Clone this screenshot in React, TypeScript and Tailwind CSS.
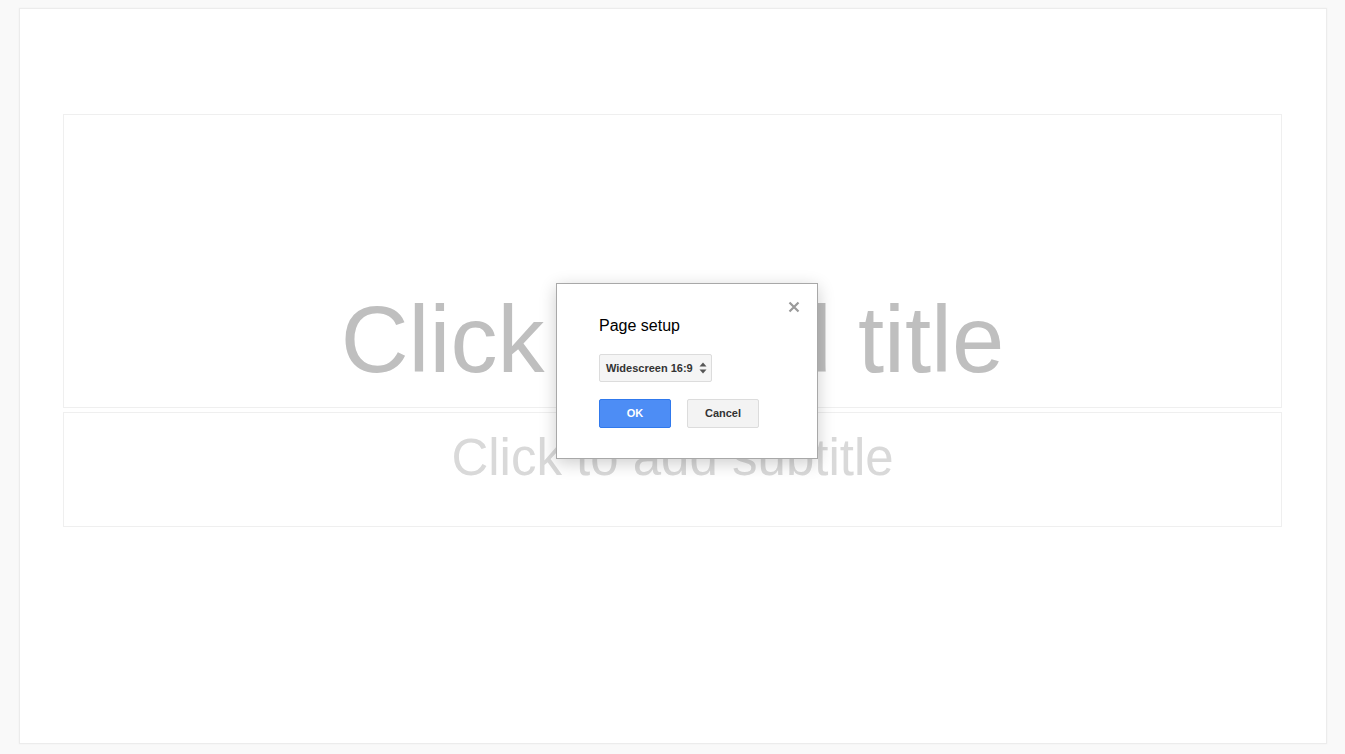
import React from "react";

const font = "font-['Liberation_Sans',Arial,sans-serif]";

function CloseIcon() {
  return (
    <svg width="12" height="12" viewBox="0 0 12 12" className="block">
      <path d="M1.5 1.5 L10.5 10.5 M10.5 1.5 L1.5 10.5" stroke="#9a9a9a" strokeWidth="2.2" strokeLinecap="butt" />
    </svg>
  );
}

function SelectArrows() {
  return (
    <svg width="8" height="12" viewBox="0 0 8 12" className="block shrink-0">
      <path d="M4 0.5 L7.5 4.5 L0.5 4.5 Z" fill="#555" />
      <path d="M4 11.5 L7.5 7.5 L0.5 7.5 Z" fill="#555" />
    </svg>
  );
}

function PageSetupDialog() {
  return (
    <div className="absolute left-[556px] top-[283px] w-[262px] h-[176px] bg-white border border-[#a8a8a8] shadow-[0_4px_16px_rgba(0,0,0,0.2)]">
      <button className="absolute right-[17px] top-[17px] w-[12px] h-[12px]">
        <CloseIcon />
      </button>
      <div className="flex flex-col pt-[34px] px-[42px]">
        <div className={`text-[16px] leading-none text-black ${font}`}>Page setup</div>
        <div className="mt-[20px] flex">
          <div className="flex items-center h-[28px] w-[113px] pl-[6px] pr-[3px] gap-[6px] rounded-[2px] border border-[#dcdcdc] bg-[#f5f5f5]">
            <span className={`text-[11px] font-bold text-[#333] whitespace-nowrap ${font}`}>Widescreen 16:9</span>
            <SelectArrows />
          </div>
        </div>
        <div className="mt-[17px] flex gap-[16px]">
          <button className={`h-[29px] w-[72px] rounded-[2px] border border-[#3079ed] bg-[#4d8df5] text-[11px] font-bold text-white ${font}`}>
            OK
          </button>
          <button className={`h-[29px] w-[72px] rounded-[2px] border border-[#dcdcdc] bg-[#f3f3f3] text-[11px] font-bold text-[#333] ${font}`}>
            Cancel
          </button>
        </div>
      </div>
    </div>
  );
}

export default function App() {
  return (
    <div className="relative w-[1345px] h-[754px] bg-[#f9f9f9] overflow-hidden">
      <div className="pt-[8px] pl-[19px]">
        <div className="w-[1308px] h-[736px] bg-white border border-[#ececec] shadow-[0_0_2px_rgba(0,0,0,0.04)]">
          <div className="flex flex-col gap-[4px] pt-[105px] pl-[43px]">
            <div className="flex flex-col justify-end items-center w-[1219px] h-[294px] border border-[#efefef] pb-[20px]">
              <div className={`text-[94px] leading-none text-[#bfbfbf] whitespace-nowrap ${font}`}>
                Click to add title
              </div>
            </div>
            <div className="flex flex-col items-center w-[1219px] h-[115px] border border-[#efefef] pt-[19px]">
              <div className={`text-[51px] leading-none text-[#d9d9d9] whitespace-nowrap ${font}`}>
                Click to add subtitle
              </div>
            </div>
          </div>
        </div>
      </div>
      <PageSetupDialog />
    </div>
  );
}
